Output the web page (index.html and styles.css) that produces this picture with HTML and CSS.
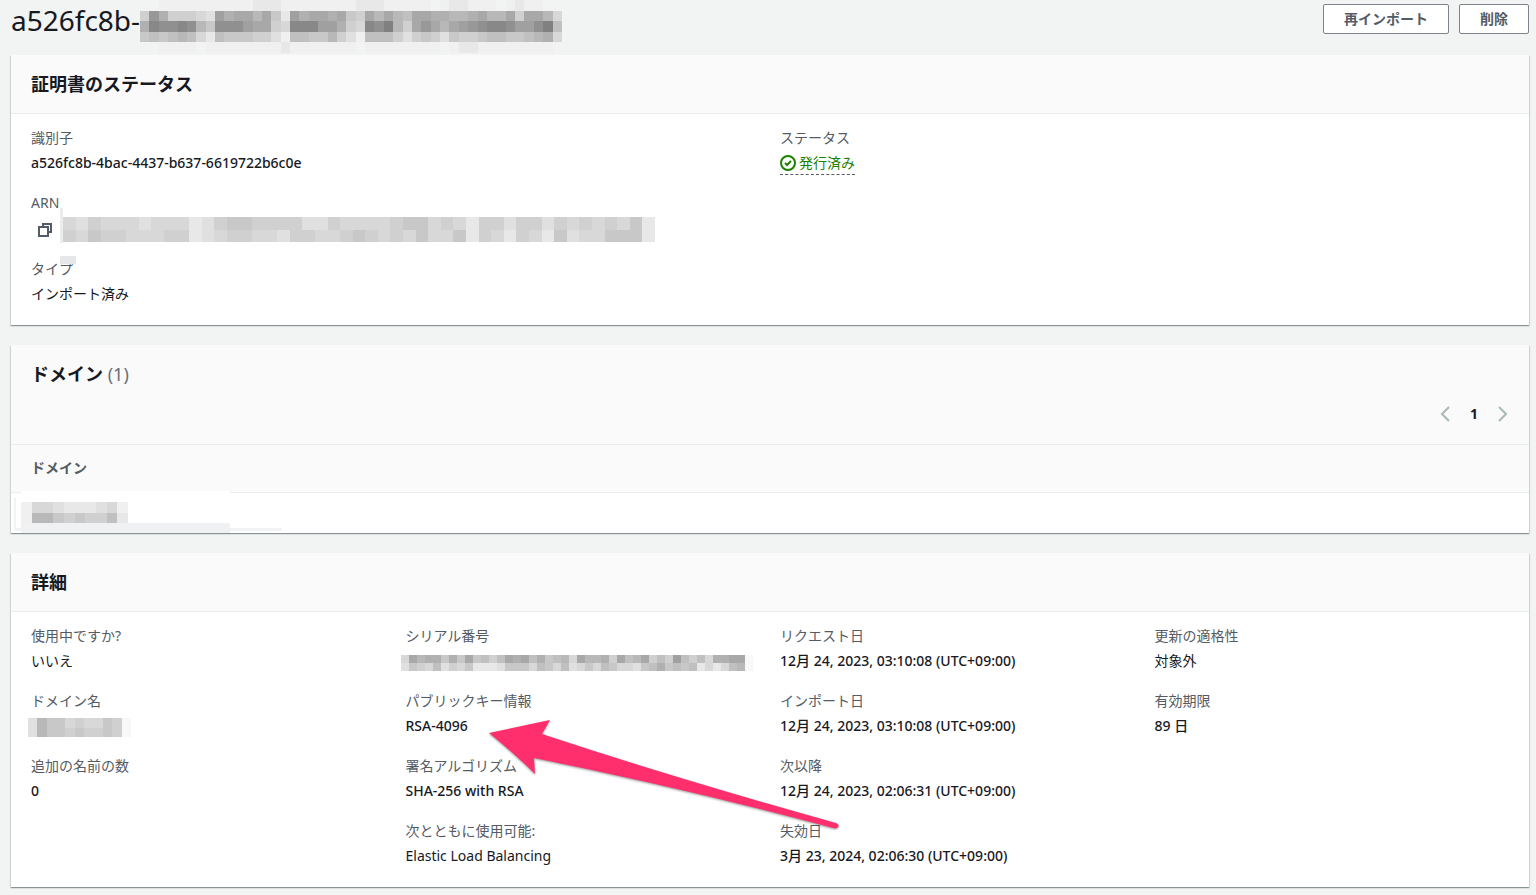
FILE: index.html
```
<!DOCTYPE html>
<html lang="ja">
<head>
    <meta charset="UTF-8">
    <meta name="viewport" content="width=device-width, initial-scale=1.0">
    <title>a526fc8b - 証明書</title>
    <link rel="stylesheet" href="styles.css">
</head>
<body>
    <header class="page-header">
        <h1>a526fc8b-<svg class="mosaic mosaic-title" data-rows="..oooooooooonnnoooooooonnnooooo.onnooo.onoo.. kdgkkklmegffhfjnegffgfjkfhfhiffgghhgfhhfkffhl gbccbchjccceffklbbbeegklbcahkfdfhfedcbbceecai jijihilnijjjkkmoiijjhkmoiiikmkjkmjkkjiijjihgl ..oooo.oooooooonooooooo.oooooooo.onnoooooooo."></svg></h1>
        <div class="actions">
            <button type="button" class="btn">再インポート</button>
            <button type="button" class="btn">削除</button>
        </div>
    </header>

    <main>
        <section class="panel">
            <div class="panel-header">
                <h2>証明書のステータス</h2>
            </div>
            <div class="panel-body columns-2">
                <dl>
                    <div class="item">
                        <dt>識別子</dt>
                        <dd class="latin">a526fc8b-4bac-4437-b637-6619722b6c0e</dd>
                    </div>
                    <div class="item">
                        <dt>ARN</dt>
                        <dd class="arn">
                            <button type="button" class="copy" aria-label="コピー">
                                <svg width="16" height="16" viewBox="0 0 16 16" fill="none" stroke="#545b64" stroke-width="2"><path d="M2 5h9v9H2zM6 5V2h8v8h-3"/></svg>
                            </button>
                            <svg class="mosaic mosaic-arn" data-rows="lmklllmlllnmkjjkkkkmmkllllkjjlklnkkmkkmklklkljn kljkklllkknmlkkllmkkllkjklkljlljnklnklnjmlljjjn"></svg>
                            <span class="arn-edge"></span>
                            <span class="arn-rest"></span>
                        </dd>
                    </div>
                    <div class="item">
                        <dt>タイプ</dt>
                        <dd>インポート済み</dd>
                    </div>
                </dl>
                <dl>
                    <div class="item">
                        <dt>ステータス</dt>
                        <dd>
                            <button type="button" class="status">
                                <svg width="16" height="16" viewBox="0 0 16 16" fill="none" stroke="#1d8102" stroke-width="2"><circle cx="8" cy="8" r="7"/><path d="M5 8l2 2 4-4"/></svg>
                                発行済み
                            </button>
                        </dd>
                    </div>
                </dl>
            </div>
        </section>

        <section class="panel">
            <div class="panel-header">
                <h2>ドメイン <span class="count">(1)</span></h2>
                <nav class="pager">
                    <button type="button" aria-label="前へ"><svg width="16" height="16" viewBox="0 0 16 16"><path d="M12 1L5 8l7 7"/></svg></button>
                    <button type="button" class="current">1</button>
                    <button type="button" aria-label="次へ"><svg width="16" height="16" viewBox="0 0 16 16"><path d="M4 1l7 7-7 7"/></svg></button>
                </nav>
            </div>
            <table>
                <thead>
                    <tr><th>ドメイン</th></tr>
                </thead>
                <tbody>
                    <tr>
                        <td>
                            <svg class="mask" width="270" height="42" viewBox="0 0 270 42">
                                <path fill="#f2f3f3" d="M0 6h2v31h266v3H0z"/>
                                <path fill="#fff" d="M7 0h209v32H7z"/>
                                <path fill="#f0f1f2" d="M7 32h209v10H7z"/>
                            </svg>
                            <svg class="mosaic mosaic-cell" data-rows="ollmnnnmlo ohhjkjkkin"></svg>
                        </td>
                    </tr>
                </tbody>
            </table>
        </section>

        <section class="panel">
            <div class="panel-header">
                <h2>詳細</h2>
            </div>
            <div class="panel-body columns-4">
                <dl>
                    <div class="item">
                        <dt>使用中ですか?</dt>
                        <dd>いいえ</dd>
                    </div>
                    <div class="item">
                        <dt>ドメイン名</dt>
                        <dd><svg class="mosaic mosaic-domain" data-rows="mhjjlklljkp mhjjkjkkjkp"></svg></dd>
                    </div>
                    <div class="item">
                        <dt>追加の名前の数</dt>
                        <dd class="latin">0</dd>
                    </div>
                </dl>
                <dl>
                    <div class="item">
                        <dt>シリアル番号</dt>
                        <dd><svg class="mosaic mosaic-serial" data-rows="lfhggjgjfjikifgfigjihlfhhgkfihfkikeikilggffp mjklimkljnnnmjjjlijlimljlijllmjigjijinlnlihp"></svg></dd>
                    </div>
                    <div class="item key-info">
                        <dt>パブリックキー情報</dt>
                        <dd class="latin">RSA-4096</dd>
                        <svg class="arrow" width="356" height="116" viewBox="0 0 356 116">
                            <path d="M1 14L62 1L54 15Q190 60 348 104Q352 106 350 108Q349 110 345 109Q200 70 46 39L47 55Q28 36 1 14z"/>
                        </svg>
                    </div>
                    <div class="item">
                        <dt>署名アルゴリズム</dt>
                        <dd class="latin">SHA-256 with RSA</dd>
                    </div>
                    <div class="item">
                        <dt>次とともに使用可能:</dt>
                        <dd>Elastic Load Balancing</dd>
                    </div>
                </dl>
                <dl>
                    <div class="item">
                        <dt>リクエスト日</dt>
                        <dd class="latin">12月 24, 2023, 03:10:08 (UTC+09:00)</dd>
                    </div>
                    <div class="item">
                        <dt>インポート日</dt>
                        <dd class="latin">12月 24, 2023, 03:10:08 (UTC+09:00)</dd>
                    </div>
                    <div class="item">
                        <dt>次以降</dt>
                        <dd class="latin">12月 24, 2023, 02:06:31 (UTC+09:00)</dd>
                    </div>
                    <div class="item">
                        <dt>失効日</dt>
                        <dd class="latin">3月 23, 2024, 02:06:30 (UTC+09:00)</dd>
                    </div>
                </dl>
                <dl>
                    <div class="item">
                        <dt>更新の適格性</dt>
                        <dd>対象外</dd>
                    </div>
                    <div class="item">
                        <dt>有効期限</dt>
                        <dd class="latin">89 日</dd>
                    </div>
                </dl>
            </div>
        </section>
    </main>

    <script src="script.js"></script>
</body>
</html>
```

FILE: styles.css
```
* {
    box-sizing: border-box;
}
body {
    margin: 0;
    padding: 4px 7px 8px 11px;
    background-color: #f2f3f3;
    color: #16191f;
    font-family: "Noto Sans", "Noto Sans CJK JP", sans-serif;
    font-size: 14px;
    line-height: 22px;
}
h1, h2, dl, dd {
    margin: 0;
}
button {
    padding: 0;
    border: 0;
    background: none;
    color: inherit;
    font: inherit;
    cursor: pointer;
}
svg {
    display: block;
}
.page-header {
    display: flex;
    justify-content: space-between;
    align-items: flex-start;
    height: 51px;
}
h1 {
    display: flex;
    align-items: flex-start;
    font-size: 28px;
    font-weight: 400;
    line-height: 32px;
}
.actions {
    display: flex;
    gap: 10px;
}
.btn {
    height: 30px;
    padding: 0 20px;
    border: 1px solid #7d848b;
    border-radius: 2px;
    background-color: #fff;
    color: #545b64;
    font-weight: 700;
    line-height: 28px;
}

/* panels */
.panel {
    margin-bottom: 20px;
    background-color: #fff;
    box-shadow: 0 1px 1px 0 rgba(0, 28, 36, 0.3), 1px 1px 1px 0 rgba(0, 28, 36, 0.1), -1px 1px 1px 0 rgba(0, 28, 36, 0.1);
}
.panel:last-child {
    margin-bottom: 0;
}
.panel-header {
    padding: 18px 20px;
    border-bottom: 1px solid #eaeded;
    background-color: #fafafa;
}
h2 {
    font-size: 18px;
    font-weight: 700;
    line-height: 22px;
}
.count {
    color: #687078;
    font-weight: 400;
}
.panel-body {
    display: grid;
    gap: 20px;
    padding: 13px 20px 20px;
}
.columns-2 {
    grid-template-columns: repeat(2, 1fr);
}
.columns-4 {
    grid-template-columns: repeat(4, 1fr);
}
.item {
    margin-bottom: 18px;
}
.item:last-child {
    margin-bottom: 0;
}
dt {
    margin-bottom: 3px;
    color: #545b64;
}
dd {
    display: flow-root;
    min-height: 22px;
}
.latin {
    font-weight: 500;
}

/* status panel */
.arn {
    position: relative;
    display: flex;
    align-items: flex-start;
    height: 23px;
}
.copy {
    width: 32px;
    padding: 5px 6px;
}
.arn-edge {
    position: absolute;
    top: -9px;
    left: 29px;
    width: 3px;
    height: 35px;
    background-color: #ebecec;
}
.arn-rest {
    position: absolute;
    top: 39px;
    left: 29px;
    width: 16px;
    height: 8px;
    background-color: #e6e7e8;
}
.status {
    display: flex;
    align-items: center;
    gap: 3px;
    border-bottom: 1px dashed #545b64;
    color: #1d8102;
}

/* domain table */
.pager {
    display: flex;
    justify-content: flex-end;
    align-items: center;
    gap: 17px;
    height: 22px;
    margin: 18px -2px 1px 0;
}
.pager path {
    fill: none;
    stroke: #aab7b8;
    stroke-width: 2;
}
.pager .current {
    font-weight: 700;
}
table {
    width: 100%;
    border-collapse: collapse;
}
th {
    height: 47px;
    padding: 0 20px;
    border-bottom: 1px solid #eaeded;
    background-color: #fafafa;
    color: #545b64;
    text-align: left;
}
td {
    position: relative;
    height: 41px;
    padding: 0 10px;
}
.mask {
    position: absolute;
    top: -2px;
    left: 3px;
}

/* pixelated values */
.mosaic {
    position: relative;
    shape-rendering: crispEdges;
}
.mosaic-title {
    width: 422px;
    height: 53px;
    margin-top: -4px;
}
.mosaic-arn {
    width: 592px;
    height: 25px;
}
.mosaic-cell {
    width: 107px;
    height: 21px;
}
.mosaic-domain {
    width: 103px;
    height: 19px;
    margin-top: 3px;
    margin-left: -3px;
}
.mosaic-serial {
    width: 352px;
    height: 16px;
    margin-top: 5px;
    margin-left: -5px;
}

/* callout over the key type */
.key-info {
    position: relative;
}
.arrow {
    position: absolute;
    top: 29px;
    left: 82px;
    fill: #ff2f6e;
    filter: drop-shadow(0 1px 1px rgba(0, 0, 0, 0.4));
    pointer-events: none;
}
```

FILE: script.js
```
// Each letter is one cell, from a (dark grey) to p (almost white), a dot is left empty
document.querySelectorAll('.mosaic').forEach(svg => {
    const rows = svg.dataset.rows.split(' ');
    svg.setAttribute('viewBox', `0 0 ${rows[0].length} ${rows.length}`);
    svg.setAttribute('preserveAspectRatio', 'none');
    svg.innerHTML = rows.map((row, y) => [...row].map((cell, x) => {
        if (cell === '.') return '';
        const grey = 128 + (cell.charCodeAt(0) - 97) * 8;
        return `<rect x="${x}" y="${y}" width="1" height="1" fill="rgb(${grey}, ${grey}, ${grey})"/>`;
    }).join('')).join('');
});
```
